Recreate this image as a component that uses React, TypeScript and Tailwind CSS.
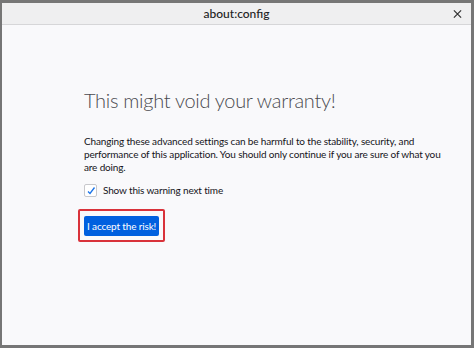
import { useState } from "react";

export default function App() {
  const [showWarning, setShowWarning] = useState(true);

  return (
    <div className="h-[348px] w-[474px] overflow-hidden bg-[#767676] pt-[3px] pl-[2px] pr-[3px] pb-[3px] font-['Lato',sans-serif]">
      <div className="flex h-full flex-col bg-[#f9f9fb]">
        {/* Title bar */}
        <div className="relative flex h-[22px] flex-shrink-0 items-center justify-center border-b border-[#d6d6d8] bg-[#efeff0]">
          <span className="text-[12px] font-medium text-[#222]">about:config</span>
          <button
            type="button"
            aria-label="Close"
            className="absolute right-[9px] top-1/2 -translate-y-1/2 text-[#333]"
          >
            <svg width="9" height="9" viewBox="0 0 10 10" fill="none" aria-hidden="true">
              <path d="M1 1l8 8M9 1L1 9" stroke="currentColor" strokeWidth="1.4" />
            </svg>
          </button>
        </div>

        {/* Body */}
        <div className="flex flex-1 flex-col items-start pl-[82px] pr-[20px] pt-[61px]">
          <h1 className="whitespace-nowrap text-[20px] leading-[28px] font-light tracking-[-0.3px] text-[#4a4a4f]">
            This might void your warranty!
          </h1>

          <p className="mt-[21px] whitespace-nowrap text-[10px] leading-[13px] tracking-[-0.15px] text-[#15141a]">
            Changing these advanced settings can be harmful to the stability, security, and
            <br />
            performance of this application. You should only continue if you are sure of what you
            <br />
            are doing.
          </p>

          <label className="mt-[9px] flex items-center gap-[6px] text-[10px] tracking-[-0.15px] text-[#15141a]">
            <button
              type="button"
              role="checkbox"
              aria-checked={showWarning}
              onClick={() => setShowWarning(!showWarning)}
              className="flex h-[13px] w-[13px] items-center justify-center rounded-[2px] border border-[#c8c8cc] bg-white"
            >
              {showWarning && (
                <svg width="10" height="10" viewBox="0 0 10 10" fill="none" aria-hidden="true">
                  <path d="M2 5.5l2 2L8.5 1.5" stroke="#1a73e8" strokeWidth="1.3" />
                </svg>
              )}
            </button>
            Show this warning next time
          </label>

          <div className="mt-[11px] -ml-[6px] flex rounded-[2px] border-2 border-[#d9323a] px-[4px] pt-[5px] pb-[4px]">
            <button
              type="button"
              className="rounded-[2px] bg-[#0060df] px-[3px] py-[3px] text-[10px] leading-[14px] tracking-[-0.15px] text-white"
            >
              I accept the risk!
            </button>
          </div>
        </div>
      </div>
    </div>
  );
}
